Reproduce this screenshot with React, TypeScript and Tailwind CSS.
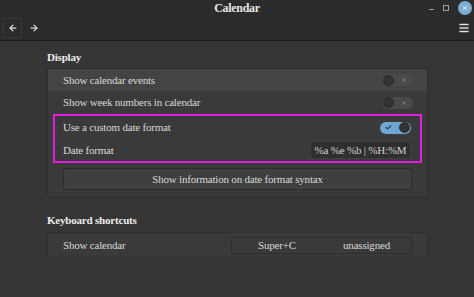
import { ArrowLeft, ArrowRight, Menu, X, Check } from "lucide-react"

function Toggle({ on }: { on?: boolean }) {
  if (on) {
    return (
      <div className="w-[31px] h-[12px] rounded-full bg-[#6ea6d6] flex items-center justify-between pl-[5px] pr-[1px]">
        <Check className="w-[7px] h-[7px] text-[#1e3b57]" strokeWidth={4} />
        <div className="w-[11px] h-[11px] rounded-full bg-[#333] border border-[#2a2a2a]" />
      </div>
    )
  }
  return (
    <div className="w-[31px] h-[12px] rounded-full bg-[#4a4a4a] flex items-center justify-between pl-[1px] pr-[6px]">
      <div className="w-[11px] h-[11px] rounded-full bg-[#333] border border-[#2a2a2a]" />
      <X className="w-[6px] h-[6px] text-[#777]" strokeWidth={4} />
    </div>
  )
}

export default function App() {
  return (
    <div
      className="w-[474px] h-[297px] bg-[#353535] text-[#d8d8d8] flex flex-col overflow-hidden"
      style={{ fontFamily: '"Liberation Serif", "DejaVu Serif", serif' }}
    >
      {/* header */}
      <div className="bg-[#2b2b2b] h-[41px] border-b border-[#202020] flex flex-col shrink-0">
        <div className="relative h-[15px] flex items-center justify-center">
          <span className="text-[12px] font-bold text-[#e6e6e6] leading-none tracking-[-0.3px]">Calendar</span>
          <div className="absolute right-[2px] top-[1px] flex items-center gap-[9px]">
            <div className="w-[5px] h-[1px] bg-[#9a9a9a] mt-[2px]" />
            <div className="w-[6px] h-[6px] border border-[#9a9a9a]" />
            <div className="w-[14px] h-[14px] rounded-full bg-[#7aaed8] flex items-center justify-center">
              <X className="w-[8px] h-[8px] text-[#dfe9f3]" strokeWidth={3} />
            </div>
          </div>
        </div>
        <div className="flex items-center px-[3px] mt-[3px]">
          <div className="w-[19px] h-[20px] border border-[#3a3a3a] rounded-[2px] flex items-center justify-center">
            <ArrowLeft className="w-[10px] h-[10px] text-[#dcdcdc]" strokeWidth={3} />
          </div>
          <div className="w-[19px] h-[20px] ml-[2px] flex items-center justify-center">
            <ArrowRight className="w-[10px] h-[10px] text-[#dcdcdc]" strokeWidth={3} />
          </div>
          <div className="ml-auto mr-[1px]">
            <Menu className="w-[12px] h-[12px] text-[#dcdcdc]" strokeWidth={3} />
          </div>
        </div>
      </div>

      {/* content */}
      <div className="flex flex-col px-[47px] pr-[46px] pt-[8px] text-[11px] tracking-[-0.2px]">
        <div className="font-bold text-[#ececec] leading-[16px] h-[19px]">Display</div>

        <div className="bg-[#3a3a3a] border border-[#2f2f2f] rounded-[2px]">
          <div className="h-[22px] bg-[#444444] flex items-center justify-between pl-[15px] pr-[14px]">
            <span>Show calendar events</span>
            <Toggle />
          </div>
          <div className="h-[23px] flex items-center justify-between pl-[15px] pr-[14px]">
            <span>Show week numbers in calendar</span>
            <Toggle />
          </div>
          <div className="mx-[5px] border-2 border-[#e020e0] h-[49px] flex flex-col">
            <div className="h-[23px] flex items-center justify-between pl-[8px] pr-[9px]">
              <span>Use a custom date format</span>
              <Toggle on />
            </div>
            <div className="flex-1 flex items-center justify-between pl-[8px] pr-[9px]">
              <span>Date format</span>
              <div className="w-[101px] h-[18px] bg-[#2f2f2f] border border-[#3f3f3f] flex items-center justify-center whitespace-nowrap text-[#cfcfcf]">
                %a %e %b | %H:%M
              </div>
            </div>
          </div>
          <div className="px-[15px] pt-[5px] pb-[6px]">
            <div className="h-[22px] bg-[#3f3f3f] border border-[#2c2c2c] rounded-[2px] flex items-center justify-center">
              Show information on date format syntax
            </div>
          </div>
        </div>

        <div className="font-bold text-[#ececec] leading-[16px] mt-[15px] h-[20px]">Keyboard shortcuts</div>

        <div className="bg-[#3a3a3a] border border-[#2f2f2f] rounded-[2px] h-[26px] flex items-center pl-[15px] pr-[15px]">
          <span>Show calendar</span>
          <div className="ml-auto w-[181px] h-[17px] border border-[#2e2e2e] flex items-center">
            <span className="w-[90px] text-center">Super+C</span>
            <span className="flex-1 text-center">unassigned</span>
          </div>
        </div>
      </div>
    </div>
  )
}
